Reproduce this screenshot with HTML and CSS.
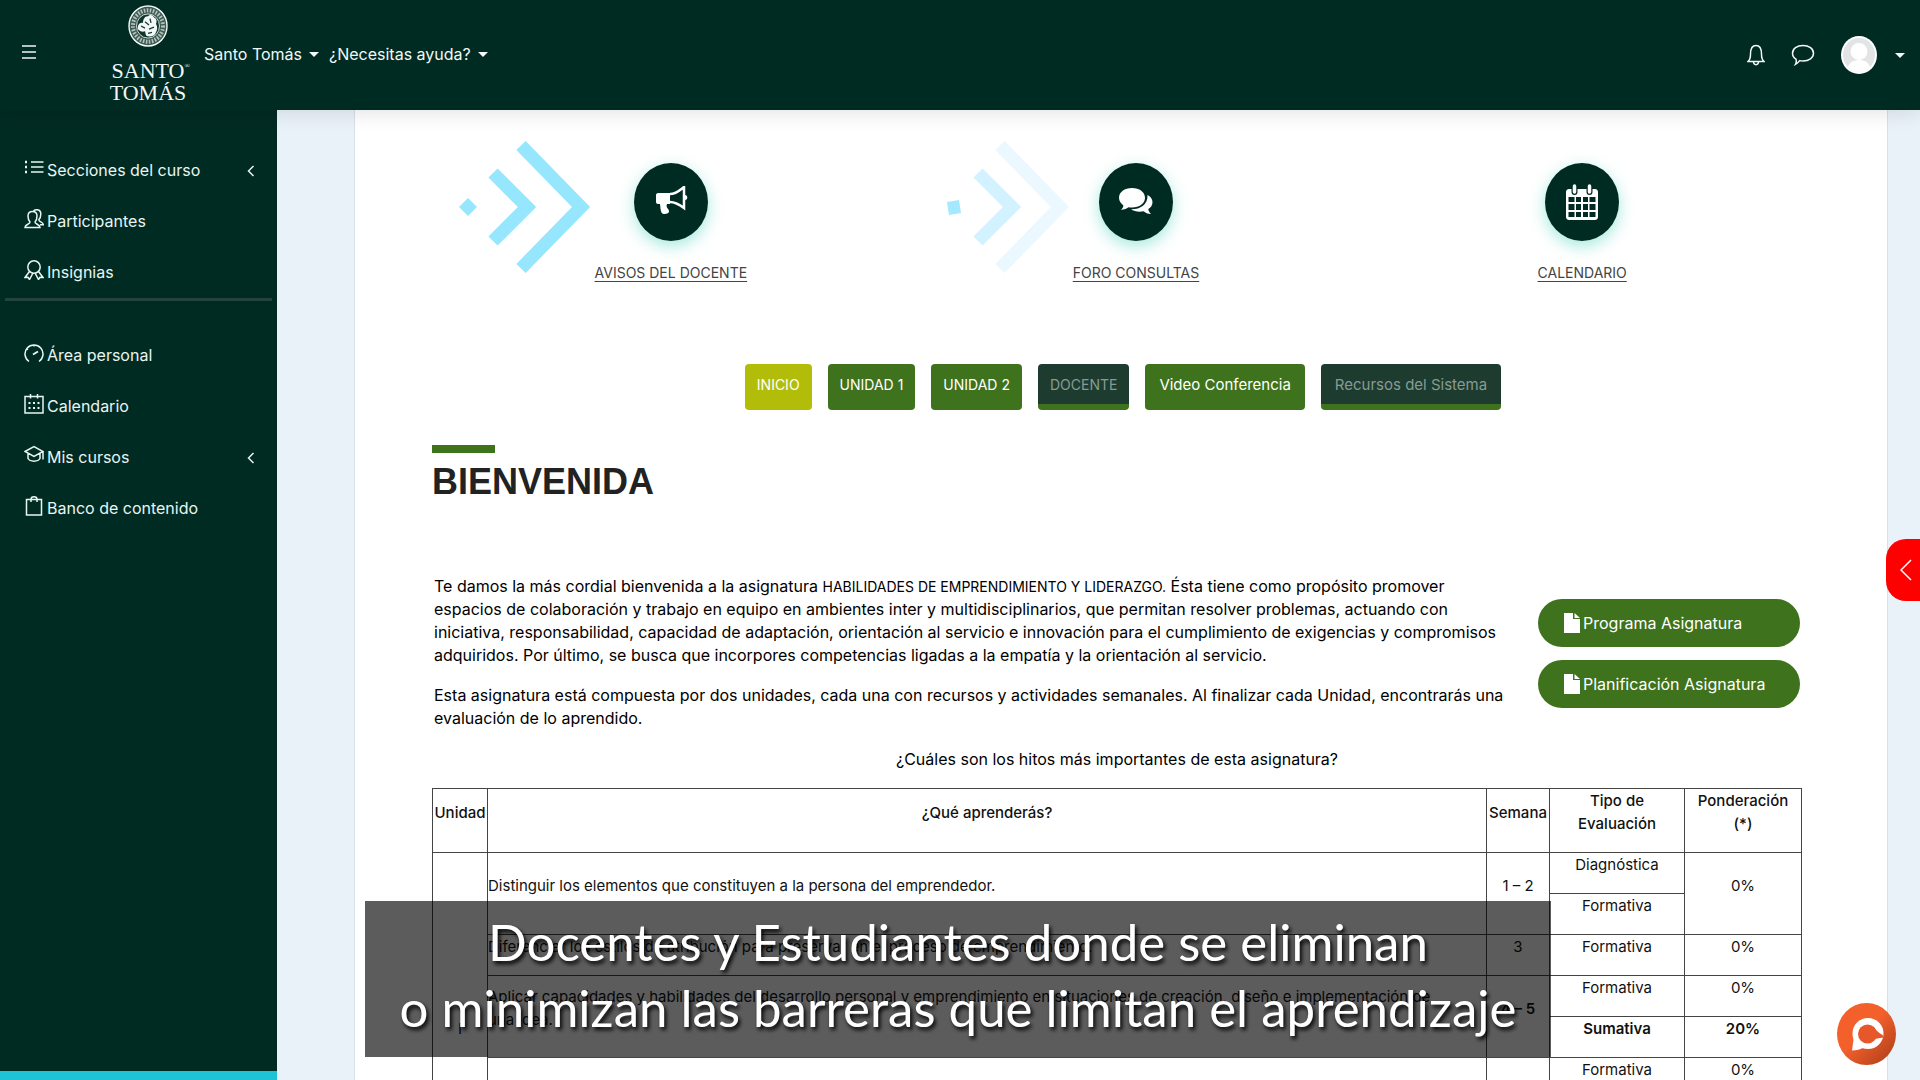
FILE: index.html
```html
<!DOCTYPE html>
<html lang="es">
<head>
<meta charset="utf-8">
<meta name="viewport" content="width=device-width, initial-scale=1">
<title>Santo Tomás</title>
<link rel="stylesheet" href="styles.css">
</head>
<body>
<header class="topbar">
  <button class="icon-button menu-toggle" aria-label="Menú">
    <svg width="16" height="16" viewBox="0 0 16 16" fill="none" stroke="currentColor" stroke-width="1.500"><path d="M1 2h14M1 8h14M1 14h14"/></svg>
  </button>
  <a class="brand" href="#">
    <svg class="seal" width="40" height="42" viewBox="0 0 40 40" preserveAspectRatio="none" fill="none" stroke="currentColor">
      <circle cx="20" cy="20" r="19" fill="#3c5a52" stroke-width="1.4"/>
      <circle cx="20" cy="20" r="15" stroke-width="4" stroke-dasharray="1.6 1.4" opacity=".65"/>
      <circle cx="20" cy="20" r="11.500" fill="#0f352d" stroke-width=".8"/>
      <path d="M10 23c-1-4 2-7 5-6 0-4 3-7 5-6 1-2 5-2 6 1 3 1 3 4 2 6 2 3 1 6 0 8-1 4-7 5-10 3l-1-4c-3 1-5 0-7-2z" fill="currentColor" stroke="none"/>
      <path d="M13 20l4 2m0-6l4 3m1-6l1 4m-2 6l5-2m-6 6l4-1" stroke="#17382f" stroke-width="1.3"/>
    </svg>
    <span class="brand-name">SANTO<sup>®</sup><br>TOMÁS</span>
  </a>
  <nav class="topnav">
    <button class="menu-button">Santo Tomás<span class="caret"></span></button>
    <button class="menu-button">¿Necesitas ayuda?<span class="caret"></span></button>
  </nav>
  <div class="user-tools">
    <button class="icon-button" aria-label="Notificaciones">
      <svg width="18" height="22" viewBox="0 0 18 22" fill="none" stroke="currentColor" stroke-width="1.5"><path d="M1 17.500c2-1.500 2.500-3 2.500-7.500 0-5 1.500-8.500 5.500-8.500s5.500 3.500 5.500 8.500c0 4.500.5 6 2.500 7.500z"/><path d="M6.500 18c.3 3.500 4.700 3.500 5 0"/></svg>
    </button>
    <button class="icon-button" aria-label="Mensajes">
      <svg width="24" height="22" viewBox="0 0 24 22" fill="none" stroke="currentColor" stroke-width="1.500"><path d="M12 1.500c6 0 10.500 3.300 10.500 7.800S18 17 12 17c-1.200 0-2.300-.1-3.300-.4-1.200 1.600-2.500 2.900-4.200 3.700.9-1.500 1-3.300.5-5.100C2.700 13.800 1.500 11.700 1.500 9.300 1.500 4.800 6 1.500 12 1.500z"/></svg>
    </button>
    <button class="icon-button profile" aria-label="Cuenta">
      <svg width="36" height="38" viewBox="0 0 36 38"><defs><clipPath id="face"><ellipse cx="18" cy="19" rx="16" ry="17"/></clipPath></defs><ellipse cx="18" cy="19" rx="18" ry="19" fill="#fff"/><ellipse cx="18" cy="19" rx="16" ry="17" fill="#e3e4e5"/><g clip-path="url(#face)" fill="#fff"><circle cx="18" cy="15.500" r="8.500"/><path d="M6 38c0-10 4-14 12-14s12 4 12 14z"/></g></svg>
      <span class="caret"></span>
    </button>
  </div>
</header>

<div class="shell">
  <aside class="sidebar">
    <nav class="side-group">
      <a class="side-link" href="#">
        <svg class="side-icon" viewBox="0 0 20 20"><path d="M7 4h12.500M7 9h12.500M7 14h12.500"/><path d="M1 4h2M1 9h2M1 14h2" stroke-width="2.500"/></svg>
        <span>Secciones del curso</span>
        <svg class="arrow" viewBox="0 0 8 12"><path d="M6.500 1L1.500 6l5 5"/></svg>
      </a>
      <a class="side-link" href="#">
        <svg class="side-icon" viewBox="0 0 20 20"><path d="M1 18.500c0-3.500 5-3 5-5.500C4 11 4 9 4 7c0-3 2-4.500 4.500-4.500S13 4 13 7c0 2 0 4-2 6 0 2.500 5 2 5 5.500z"/><path d="M9.500 2c.8-1 2-1.300 3.200-1.300 2.400 0 4.100 1.500 4.100 4.300 0 2-.2 4-2 5.800 0 2.200 4.500 2 4.500 5H16"/></svg>
        <span>Participantes</span>
      </a>
      <a class="side-link" href="#">
        <svg class="side-icon" viewBox="0 0 20 20"><circle cx="10" cy="7" r="6.200"/><path d="M5.500 11.500L1 17.500l3-.2 1.500 2.200 3.500-6.500M14.500 11.500l4.500 6-3-.2-1.500 2.200L11 13"/></svg>
        <span>Insignias</span>
      </a>
    </nav>
    <hr class="side-rule">
    <nav class="side-group">
      <a class="side-link" href="#">
        <svg class="side-icon" viewBox="0 0 20 20"><path d="M5 18.500A9 9 0 1 1 15 18.500"/><path d="M9 11.500l5-3" stroke-width="2"/><path d="M10 2v1.500M3 6l1 .6"/></svg>
        <span>Área personal</span>
      </a>
      <a class="side-link" href="#">
        <svg class="side-icon" viewBox="0 0 20 20"><path d="M1 2.500h18v16.500H1zM6.500 0v4.500M13.500 0v4.500"/><path d="M4.500 9h2M9 9h2M13.500 9h2M4.500 14h2M9 14h2M13.500 14h2" stroke-width="2.200"/></svg>
        <span>Calendario</span>
      </a>
      <a class="side-link" href="#">
        <svg class="side-icon" viewBox="0 0 20 20"><path d="M1 6.500L10 1.500l9 5-9 5zM4 8.500v5c2 3.500 10 3.500 12 0v-5M19 6.500v8"/></svg>
        <span>Mis cursos</span>
        <svg class="arrow" viewBox="0 0 8 12"><path d="M6.500 1L1.500 6l5 5"/></svg>
      </a>
      <a class="side-link" href="#">
        <svg class="side-icon" viewBox="0 0 20 20"><path d="M2.500 3.500h15v15.500h-15zM7 6V3c0-3 6-3 6 0v3"/></svg>
        <span>Banco de contenido</span>
      </a>
    </nav>
    <div class="side-footer"></div>
  </aside>

  <main class="page">
    <div class="card">
      <section class="tiles">
        <div class="tile">
          <svg class="arrows" width="132" height="132" viewBox="0 0 132 132" fill="none" stroke="#96e6fe" stroke-width="13"><path d="M9 57l9 9-9 9-9-9z" fill="#96e6fe" stroke="none"/><path d="M34 32l34 34-34 34M62 4.500L122 66l-60 61.500"/></svg>
          <a class="tile-link" href="#">
            <span class="disc"><svg width="34" height="32" viewBox="0 0 34 32"><path d="M2 9c0-1 .8-2 2-2h12v11H4c-1.200 0-2-1-2-2zM6 18h7c-1 2 0 4 1 5s1 2 1 3c-1 2-6 3-7.500.500C6.300 24 6.500 21 6 18z" fill="#fff"/><path d="M16 8c6 0 10-4 14-7v21c-4-3-8-6-14-6" fill="none" stroke="#fff" stroke-width="2.500"/><path d="M31 9c3 0 3 5 0 5z" fill="#fff"/></svg></span>
            <span class="tile-label">AVISOS DEL DOCENTE</span>
          </a>
        </div>
        <div class="tile">
          <svg class="arrows" width="132" height="132" viewBox="0 0 132 132" fill="none" stroke-width="13"><path d="M10 61l12-2 2 13-12 2z" fill="#a4e9ff"/><path d="M41 32l34 34-34 34" stroke="#d3f2ff"/><path d="M63 4.500L123 66l-60 61.500" stroke="#ebf8ff"/></svg>
          <a class="tile-link" href="#">
            <span class="disc"><svg width="34" height="28" viewBox="0 0 34 28" fill="#fff"><path d="M13 0c7.500 0 13 4 13 9.800s-5.500 9.700-13 9.700c-1.200 0-2.400-.1-3.500-.3-2 1.500-4 2.200-7.500 2.500 1.500-1.300 2.200-2.500 2.400-4.300C1.800 15.600 0 12.900 0 9.800 0 4 5.500 0 13 0z"/><path d="M28.500 7c3 1.500 5 4 5 7.200 0 2.900-1.700 5.300-4.200 6.900.2 2 1 3.300 2.700 4.900-3.500-.2-5.500-1-7.500-2.700-5 .9-9.500 0-12.500-2C21 21.500 29 17 28.500 7z"/></svg></span>
            <span class="tile-label">FORO CONSULTAS</span>
          </a>
        </div>
        <div class="tile">
          <a class="tile-link" href="#">
            <span class="disc"><svg width="32" height="36" viewBox="0 0 32 36"><path d="M3 5h26c1.500 0 3 1.300 3 3v25c0 1.700-1.500 3-3 3H3c-1.500 0-3-1.300-3-3V8c0-1.700 1.500-3 3-3z" fill="#fff"/><path d="M2.500 13h6v5h-6zM10 13h5v5h-5zM17 13h5v5h-5zM23.500 13h6v5h-6zM2.500 20h6v6h-6zM10 20h5v6h-5zM17 20h5v6h-5zM23.500 20h6v6h-6zM2.500 28h6v5h-6zM10 28h5v5h-5zM17 28h5v5h-5zM23.500 28h6v5h-6z" fill="#002b23"/><path d="M8.500 3v5M23.500 3v5" stroke="#002b23" stroke-width="6" stroke-linecap="round"/><path d="M8.500 2v6M23.500 2v6" stroke="#fff" stroke-width="3.500" stroke-linecap="round"/></svg></span>
            <span class="tile-label">CALENDARIO</span>
          </a>
        </div>
      </section>

      <nav class="tabs">
        <a class="tab tab-caps tab-active" href="#">INICIO</a>
        <a class="tab tab-caps" href="#">UNIDAD 1</a>
        <a class="tab tab-caps" href="#">UNIDAD 2</a>
        <a class="tab tab-caps tab-dim" href="#">DOCENTE</a>
        <a class="tab" href="#">Video Conferencia</a>
        <a class="tab tab-dim" href="#">Recursos del Sistema</a>
      </nav>

      <h1 class="title">BIENVENIDA</h1>

      <div class="intro">
        <div class="intro-text">
          <p>Te damos la más cordial bienvenida a la asignatura <span class="course-name">HABILIDADES DE EMPRENDIMIENTO Y LIDERAZGO.</span> Ésta tiene como propósito promover<br>
          espacios de colaboración y trabajo en equipo en ambientes inter y multidisciplinarios, que permitan resolver problemas, actuando con<br>
          iniciativa, responsabilidad, capacidad de adaptación, orientación al servicio e innovación para el cumplimiento de exigencias y compromisos<br>
          adquiridos. Por último, se busca que incorpores competencias ligadas a la empatía y la orientación al servicio.</p>
          <p>Esta asignatura está compuesta por dos unidades, cada una con recursos y actividades semanales. Al finalizar cada Unidad, encontrarás una<br>
          evaluación de lo aprendido.</p>
        </div>
        <div class="downloads">
          <a class="pill" href="#"><svg width="16" height="20" viewBox="0 0 16 20" fill="#fff"><path d="M0 0h9v6h7v14H0zM10.500 0L16 5h-5.500z"/></svg>Programa Asignatura</a>
          <a class="pill" href="#"><svg width="16" height="20" viewBox="0 0 16 20" fill="#fff"><path d="M0 0h9v6h7v14H0zM10.500 0L16 5h-5.500z"/></svg>Planificación Asignatura</a>
        </div>
      </div>

      <table class="plan">
        <caption>¿Cuáles son los hitos más importantes de esta asignatura?</caption>
        <colgroup><col class="c-unit"><col><col class="c-week"><col class="c-type"><col class="c-weight"></colgroup>
        <thead>
          <tr><th><p>Unidad</p></th><th><p>¿Qué aprenderás?</p></th><th><p>Semana</p></th><th><p>Tipo de<br>Evaluación</p></th><th><p>Ponderación<br>(*)</p></th></tr>
        </thead>
        <tbody>
          <tr><td rowspan="9"><p>I</p></td><td class="goal" rowspan="2"><p>Distinguir los elementos que constituyen a la persona del emprendedor.</p></td><td rowspan="2"><p>1 – 2</p></td><td><p>Diagnóstica</p></td><td rowspan="2"><p>0%</p></td></tr>
          <tr><td><p>Formativa</p></td></tr>
          <tr><td class="goal"><p>Diferenciar los estilos de atribución para preservar en el proceso de emprendimiento.</p></td><td><p>3</p></td><td><p>Formativa</p></td><td><p>0%</p></td></tr>
          <tr><td class="goal" rowspan="2"><p>Aplicar capacidades y habilidades del desarrollo personal y emprendimiento en situaciones de creación, diseño e implementación de<br>una idea.</p></td><td rowspan="2"><p><b>4 – 5</b></p></td><td><p>Formativa</p></td><td><p>0%</p></td></tr>
          <tr><td><p><b>Sumativa</b></p></td><td><p><b>20%</b></p></td></tr>
          <tr><td rowspan="4"></td><td rowspan="4"></td><td><p>Formativa</p></td><td><p>0%</p></td></tr>
          <tr class="blank"><td></td><td></td></tr>
          <tr class="blank"><td></td><td></td></tr>
          <tr class="blank"><td></td><td></td></tr>
        </tbody>
      </table>
    </div>
  </main>
</div>

<button class="drawer-toggle" aria-label="Abrir panel"><svg width="12" height="22" viewBox="0 0 12 22" fill="none" stroke="#fff" stroke-width="1.500"><path d="M11 1L1 11l10 10"/></svg></button>
<button class="chat-button" aria-label="Chat">
  <svg width="34" height="36" viewBox="0 0 34 36"><circle cx="18" cy="17.500" r="15.500" fill="#fff"/><path d="M4 20L2 34.500c5 0 8-1 12-3z" fill="#fff"/><circle cx="17.500" cy="18" r="9.500" fill="#e8572a"/><path d="M23 10.500c2.500 3 5 6 9.500 8.500l1.500 2.500-7 1-5 2z" fill="#e8572a"/></svg>
</button>
<div class="subtitle"><p>Docentes y Estudiantes donde se eliminan<br>o minimizan las barreras que limitan el aprendizaje</p></div>
</body>
</html>
```
FILE: styles.css
```css
* { box-sizing: border-box; }

body {
  margin: 0;
  height: 100vh;
  overflow: hidden;
  display: flex;
  flex-direction: column;
  font-family: Inter, "Liberation Sans", sans-serif;
  font-size: 15px;
  line-height: 23px;
  color: #111;
  background: #eaf2f9;
}

p { margin: 0; }
a { color: inherit; text-decoration: none; }
button { font: inherit; color: inherit; border: 0; background: none; padding: 0; cursor: pointer; }
svg { display: block; flex: none; }

/* Top bar */
.topbar {
  flex: none;
  height: 110px;
  display: flex;
  align-items: center;
  padding: 0 15px 0 21px;
  font-size: 16px;
  color: #f2f8f6;
  background: #002b23;
  box-shadow: 0 2px 20px rgba(0, 0, 0, .12);
  position: relative;
  z-index: 1;
}
.icon-button { display: flex; align-items: center; }
.menu-toggle { margin-bottom: 6px; }
.brand {
  width: 78px;
  margin-left: 72px;
  display: flex;
  flex-direction: column;
  align-items: center;
  gap: 13px;
  align-self: flex-start;
  padding-top: 5px;
}
.brand-name {
  font: 22px/22px "Liberation Serif", serif;
  text-align: center;
  white-space: nowrap;
  position: relative;
}
.brand-name sup { position: absolute; font-size: 7px; line-height: 8px; top: 2px; }
.topnav { display: flex; gap: 10px; margin: 0 0 2px 17px; }
.menu-button { display: flex; align-items: center; gap: 7px; }
.caret { border: 5px solid transparent; border-top-color: currentColor; border-bottom: 0; }
.user-tools { display: flex; align-items: center; gap: 26px; margin-left: auto; }
.profile { gap: 18px; }

/* Side menu */
.shell { flex: 1; display: flex; min-height: 0; }
.sidebar {
  width: 277px;
  flex: none;
  display: flex;
  flex-direction: column;
  font-size: 16px;
  color: #e9f5f1;
  background: #002b23;
  padding-top: 35px;
}
.side-link { display: flex; align-items: center; gap: 3px; height: 51px; padding: 0 22px 0 24px; }
.side-icon { width: 20px; height: 20px; margin-bottom: 5px; fill: none; stroke: currentColor; stroke-width: 1.5; }
.arrow { width: 8px; height: 12px; margin-left: auto; fill: none; stroke: currentColor; stroke-width: 1.500; }
.side-rule { width: auto; height: 3px; margin: 0 5px 29px; border: 0; background: #23433f; }
.side-footer { height: 9px; margin-top: auto; background: #1fc3d8; }

/* Course page */
.page { flex: 1; min-width: 0; overflow: hidden; padding: 0 32px 0 77px; }
.card { min-height: 100%; padding: 31px 85px 0 77px; background: #fff; border: 1px solid #d8e0e6; border-top: 0; }

.tiles { display: grid; grid-template-columns: 478fr 453fr 440fr; height: 142px; }
.tile { display: grid; grid-template-columns: 1fr auto 1fr; column-gap: 4px; }
.tile-link { grid-column: 2; display: flex; flex-direction: column; align-items: center; padding-top: 22px; gap: 20px; }
.arrows { justify-self: end; grid-column: 1; grid-row: 1; }
.disc {
  width: 74px;
  height: 78px;
  border-radius: 50%;
  display: grid;
  place-items: center;
  background: #002b23;
  box-shadow: 0 5px 16px rgba(30, 200, 170, .4);
}
.tile-label { font-size: 14px; color: #444; text-decoration: underline; text-underline-offset: 3px; }

.tabs { display: flex; justify-content: center; gap: 16px; margin: 81px 0 0 12px; }
.tab {
  height: 46px;
  padding: 9px 14px 0;
  border-radius: 4px;
  color: #fff;
  background: #3e721c;
}
.tab-caps { font-size: 14px; padding: 9px 12px 0; }
.tab-active { background: #b2bd0a; }
.tab-dim { color: #879b93; background: #1d3c2f; border-bottom: 6px solid #3e721c; }

.title { margin: 35px 0 0; font: bold 36px/40px "Liberation Sans", sans-serif; color: #222; }
.title::before { content: ""; display: block; width: 63px; height: 8px; margin-bottom: 9px; background: #3e721c; }

.intro { display: grid; grid-template-columns: minmax(0, 1fr) 262px; gap: 54px; margin: 73px 2px 0 2px; }
.intro-text { font-size: 16px; color: #000; white-space: nowrap; }
.intro-text p { margin-bottom: 17px; }
.course-name { font-size: 14px; }
.downloads { display: flex; flex-direction: column; gap: 13px; padding-top: 24px; }
.pill {
  height: 48px;
  padding: 0 26px;
  display: flex;
  align-items: center;
  gap: 3px;
  border-radius: 24px;
  font-size: 16px;
  color: #fff;
  background: #3e721c;
}

/* Evaluation plan */
.plan { width: 100%; table-layout: fixed; border-collapse: collapse; }
.plan caption { font-size: 16px; color: #000; padding: 1px 0 17px; }
.plan th, .plan td { padding: 0; border: 1px solid #444; text-align: center; vertical-align: middle; font-weight: 400; }
.plan th { font-weight: 500; }
.plan b { font-weight: 600; }
.plan p { margin-bottom: 17px; }
.plan .goal { text-align: left; white-space: nowrap; }
.plan .blank { height: 41px; }
.c-unit { width: 55px; }
.c-week { width: 63px; }
.c-type { width: 135px; }
.c-weight { width: 117px; }

/* Floating elements */
.drawer-toggle {
  position: fixed;
  right: 0;
  top: 539px;
  z-index: 2;
  width: 34px;
  height: 62px;
  padding-left: 14px;
  border-radius: 20px 0 0 20px;
  background: #f00;
}
.chat-button {
  position: fixed;
  right: 24px;
  bottom: 15px;
  z-index: 2;
  width: 59px;
  height: 62px;
  display: grid;
  place-items: center;
  border-radius: 50%;
  background: linear-gradient(135deg, #f4602c 45%, #a83c18);
}
.subtitle {
  position: fixed;
  left: 365px;
  right: 369px;
  bottom: 23px;
  z-index: 3;
  height: 156px;
  padding-top: 8px;
  text-align: center;
  white-space: nowrap;
  font: 51px/66px Lato, "Open Sans", sans-serif;
  color: #fff;
  background: rgba(0, 0, 0, .64);
  text-shadow: 2px 3px 4px #000;
}
```
